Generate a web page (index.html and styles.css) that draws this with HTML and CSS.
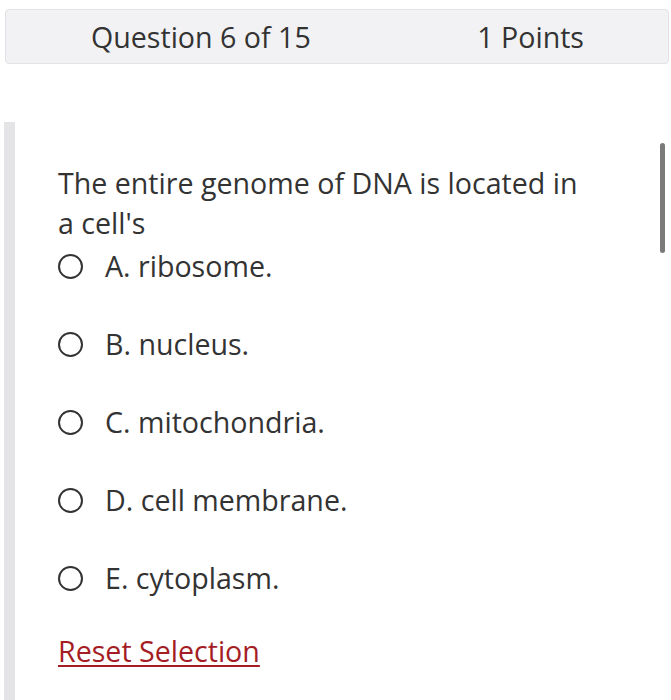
FILE: index.html
```html
<!DOCTYPE html>
<html>
<head>
<meta charset="utf-8">
<link rel="stylesheet" href="styles.css">
</head>
<body>
<div class="header">
  <span class="qnum">Question 6 of 15</span>
  <span class="points">1 Points</span>
</div>
<div class="panel">
  <div class="content">
    <p class="question">The entire genome of DNA is located in a cell's</p>
    <ul class="options">
      <li><span class="radio"></span>A. ribosome.</li>
      <li><span class="radio"></span>B. nucleus.</li>
      <li><span class="radio"></span>C. mitochondria.</li>
      <li><span class="radio"></span>D. cell membrane.</li>
      <li><span class="radio"></span>E. cytoplasm.</li>
    </ul>
    <a class="reset" href="#">Reset Selection</a>
  </div>
  <div class="scrollbar"></div>
</div>
</body>
</html>
```
FILE: styles.css
```css
html, body {
  margin: 0;
  padding: 0;
  background: #ffffff;
  font-family: "Open Sans", "Liberation Sans", sans-serif;
  color: #333333;
  overflow: hidden;
}
.header {
  margin: 9px 2px 0 5px;
  height: 53px;
  background: #f2f2f4;
  border: 1px solid #e2e2e6;
  border-radius: 4px;
  display: flex;
  align-items: center;
  font-size: 28.6px;
}
.qnum {
  margin-left: 85px;
}
.points {
  margin-left: auto;
  margin-right: 84px;
}
.panel {
  position: relative;
  margin: 58px 0 0 4px;
  border-left: 11px solid #e4e4e6;
  height: 600px;
}
.content {
  padding: 41px 0 0 43px;
  width: 530px;
}
.question {
  margin: 0;
  font-size: 28.6px;
  line-height: 40px;
}
.options {
  list-style: none;
  margin: 3px 0 0 0;
  padding: 0;
  display: flex;
  flex-direction: column;
  gap: 38px;
}
.options li {
  display: flex;
  align-items: center;
  font-size: 28.6px;
  line-height: 40px;
}
.radio {
  width: 21px;
  height: 21px;
  border: 2px solid #333333;
  border-radius: 50%;
  margin-right: 22px;
  flex: none;
}
.reset {
  display: inline-block;
  margin-top: 33px;
  font-size: 28.6px;
  line-height: 40px;
  color: #a51d24;
  text-decoration: underline;
  text-decoration-thickness: 2px;
  text-underline-offset: 3px;
}
.scrollbar {
  position: absolute;
  left: 645px;
  top: 21px;
  width: 5px;
  height: 110px;
  border-radius: 3px;
  background: #7a7a7a;
}
```
